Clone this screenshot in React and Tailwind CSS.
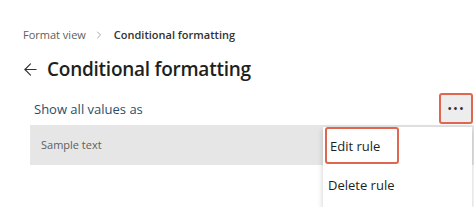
import { ArrowLeft, ChevronRight } from "lucide-react";

export default function App() {
  return (
    <div
      className="relative h-[207px] w-[474px] overflow-hidden bg-white"
      style={{ fontFamily: '"Open Sans", "Noto Sans", sans-serif' }}
    >
      <div className="flex items-center pl-[23px] pt-[27px] text-[11px] leading-[16px]">
        <span className="text-[#605e5c]">Format view</span>
        <ChevronRight className="ml-[7px] mr-[9px] h-[12px] w-[12px] text-[#8a8886]" strokeWidth={1.5} />
        <span className="font-semibold text-[#323130]">Conditional formatting</span>
      </div>

      <div className="mt-[13px] flex items-center pl-[21px]">
        <ArrowLeft className="h-[19px] w-[19px] text-[#323130]" strokeWidth={1.4} />
        <h1 className="ml-[7px] text-[19px] font-semibold leading-[26px] tracking-[-0.25px] text-[#201f1e]">
          Conditional formatting
        </h1>
      </div>

      <div className="mt-[11px] flex items-center justify-between pl-[34px] pr-[1px]">
        <span className="text-[13px] leading-[20px] text-[#25506e]">Show all values as</span>
        <button
          type="button"
          className="flex h-[31px] w-[34px] items-center justify-center rounded-[3px] border-2 border-[#e0674f] bg-[#ededed] text-[#323130]"
        >
          <span className="text-[13px] leading-none tracking-[1px]">•••</span>
        </button>
      </div>

      <div className="ml-[30px] mt-[1px] flex h-[40px] items-center bg-[#e6e6e6] pl-[11px]">
        <span className="text-[11px] text-[#605e5c]">Sample text</span>
      </div>

      <div className="absolute left-[323px] top-[127px] w-[149px] bg-white pb-[4px] shadow-[0_2px_6px_rgba(0,0,0,0.2)]">
        <div className="ml-[2px] flex h-[37px] w-[74px] items-center rounded-[3px] border-2 border-[#e0674f] pl-[3px] pt-[2px] text-[13px] text-[#201f1e]">
          Edit rule
        </div>
        <div className="flex h-[40px] items-center pl-[5px] pt-[4px] text-[13px] text-[#201f1e]">
          Delete rule
        </div>
      </div>
    </div>
  );
}
